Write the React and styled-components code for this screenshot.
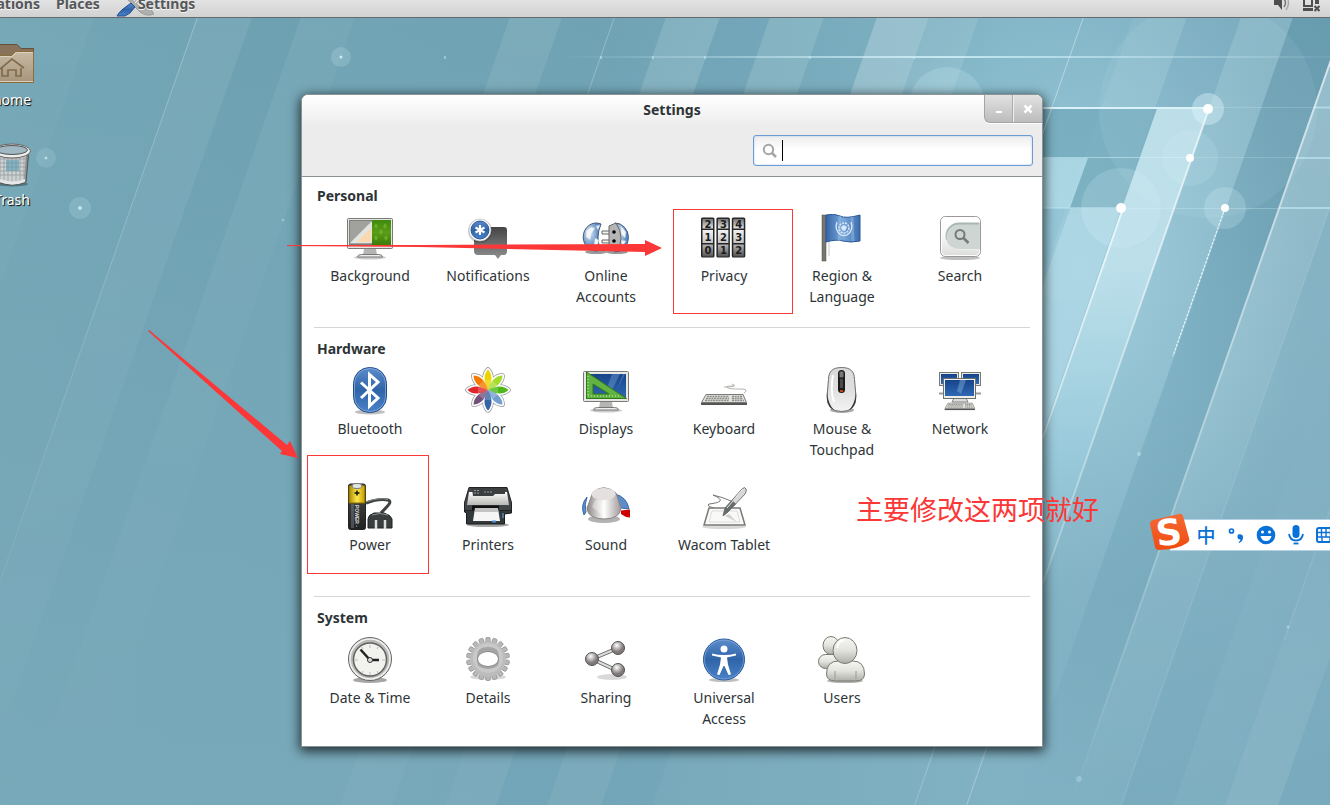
import React from 'react';
import styled, { createGlobalStyle } from 'styled-components';

const red = '#fc3737';
const ink = '#2e3436';
const imeBlue = '#0a71d8';

const GlobalStyle = createGlobalStyle`
  html, body, #root {
    height: 100%;
    margin: 0;
  }
  body {
    overflow: hidden;
    font-family: 'Noto Sans', 'Noto Sans CJK SC', sans-serif;
    font-size: 14px;
    color: ${ink};
  }
  button {
    font: inherit;
    color: inherit;
    border: 0;
    padding: 0;
    background: none;
  }
  svg {
    display: block;
  }
`;

const Desktop = styled.div`
  position: relative;
  width: 100%;
  height: 100%;
  overflow: hidden;
  background: #78a8b8;
`;

const Backdrop = styled.svg`
  position: absolute;
  top: 0; left: 0;
  width: 100%;
  height: 100%;
`;

const Panel = styled.header`
  position: relative;
  display: flex;
  justify-content: space-between;
  align-items: center;
  height: 26px;
  margin-top: -9px;
  border-bottom: 1px solid #666a6c;
  background: linear-gradient(#ebebeb, #d2d2d2);
  color: #555759;
`;

const Menus = styled.nav`
  display: flex;
  align-items: center;
  gap: 16px;
  margin-left: -60px;
`;

const Menu = styled.button`
  display: flex;
  align-items: center;
  justify-content: flex-end;
  min-width: ${({ $width }) => $width || 0}px;
  font-weight: 700;
  line-height: 20px;
  text-shadow: 0 1px #f4f4f4;
  & svg {
    margin-right: -16px;
  }
`;

const Tray = styled.div`
  display: flex;
  gap: 12px;
  padding-right: 10px;
`;

const Shortcut = styled.button`
  position: absolute;
  left: -36px;
  top: ${({ $top }) => $top}px;
  width: 96px;
  display: flex;
  flex-direction: column;
  align-items: center;
  gap: 3px;
  color: #fff;
  line-height: 20px;
  text-shadow: 1px 1px 1px #000;
`;

const Window = styled.section`
  position: absolute;
  left: 301px;
  top: 94px;
  width: 740px;
  border: 1px solid #8b9394;
  border-radius: 7px 7px 0 0;
  background: #fff;
  box-shadow: 0 3px 12px 1px rgba(0, 0, 0, 0.75);
`;

const WindowHead = styled.div`
  border-bottom: 1px solid #8b9394;
  border-radius: 6px 6px 0 0;
  background: linear-gradient(#fff, #ececec 32px);
`;

const TitleBar = styled.div`
  display: grid;
  grid-template-columns: 58px 1fr 58px;
  height: 30px;
`;

const Title = styled.h1`
  grid-column: 2;
  margin: 0;
  font-size: 14px;
  line-height: 30px;
  text-align: center;
`;

const WindowButtons = styled.div`
  display: flex;
  height: 27px;
  border: solid #a5a5a5;
  border-width: 0 0 1px 1px;
  border-radius: 0 6px 0 6px;
  overflow: hidden;
  box-shadow: 0 1px #fff;
  background: linear-gradient(#e2e2e2, #bcbcbc);
`;

const WindowButton = styled.button`
  flex: 1;
  display: grid;
  place-items: center;
  & + & {
    border-left: 1px solid #efefef;
    box-shadow: -1px 0 #ababab;
  }
`;

const Toolbar = styled.div`
  display: flex;
  justify-content: flex-end;
  padding: 10px 9px;
`;

const Search = styled.label`
  display: flex;
  align-items: center;
  gap: 4px;
  box-sizing: border-box;
  width: 280px;
  height: 31px;
  padding: 0 8px;
  border: 1px solid #6c9ad2;
  border-radius: 3px;
  background: linear-gradient(#ededed, #fff 14px);
  box-shadow: inset 0 0 2px #a9c4e6;
`;

const Caret = styled.span`
  width: 1px;
  height: 21px;
  background: #000;
`;

const SearchInput = styled.input`
  flex: 1;
  min-width: 0;
  border: 0;
  outline: 0;
  padding: 0;
  background: transparent;
  font: inherit;
`;

const Group = styled.section`
  margin: 0 12px;
  padding: 9px 0 20px;
  & + & {
    border-top: 1px solid #d5d7d6;
  }
  &:first-of-type {
    padding-top: 7px;
  }
  &:last-of-type {
    padding-bottom: 17px;
  }
`;

const GroupTitle = styled.h2`
  margin: 0;
  padding-left: 3px;
  font-size: 14px;
  line-height: 24px;
`;

const Items = styled.div`
  display: grid;
  grid-template-columns: repeat(6, 118px);
  row-gap: 23px;
  margin: 6px 0 0 -3px;
`;

const Item = styled.button`
  display: flex;
  flex-direction: column;
  align-items: center;
  gap: 3px;
`;

const ItemLabel = styled.span`
  max-width: 98px;
  min-height: 42px;
  line-height: 21px;
`;

const Notes = styled.div`
  position: absolute;
  inset: 0;
  pointer-events: none;
`;

const Arrows = styled.svg`
  position: absolute;
  top: 0; left: 0;
  width: 100%;
  height: 100%;
`;

const Mark = styled.div`
  position: absolute;
  box-sizing: border-box;
  left: ${({ $x }) => $x}px;
  top: ${({ $y }) => $y}px;
  width: ${({ $w }) => $w}px;
  height: ${({ $h }) => $h}px;
  border: 1px solid ${red};
`;

const NoteText = styled.p`
  position: absolute;
  left: 856px;
  top: 491px;
  margin: 0;
  color: ${red};
  font-family: 'Noto Sans CJK SC', sans-serif;
  font-size: 27px;
  line-height: 36px;
  white-space: nowrap;
`;

const Ime = styled.div`
  position: absolute;
  top: 519px;
  left: 1170px;
  right: 0;
  height: 30px;
  display: flex;
  align-items: center;
  gap: 10px;
  padding-left: 26px;
  border: solid #b4d2e4;
  border-width: 1px 0;
  background: #fff;
  color: ${imeBlue};
`;

const ImeLogo = styled.svg`
  position: absolute;
  left: -22px;
  top: -8px;
`;

const ImeKey = styled.button`
  flex: none;
  width: 20px;
  height: 24px;
  display: grid;
  place-items: center;
  font-family: 'Noto Sans CJK SC', sans-serif;
  font-size: 19px;
  font-weight: 500;
  line-height: 24px;
`;

// Shared paints, referenced from every icon
const Paint = ({ id, from, mid, to, flat }) => (
  <linearGradient id={id} x1="0" y1="0" x2={flat ? 1 : 0} y2={flat ? 0 : 1}>
    <stop offset="0" stopColor={from} />
    {mid && <stop offset=".5" stopColor={mid} />}
    <stop offset="1" stopColor={to} />
  </linearGradient>
);

const Slant = ({ x, w, y1 = 17, y2 = 805, fill = '#fff', o = 0.1 }) => {
  const at = (px, y) => `${px - 0.35 * y},${y}`;
  return (
    <polygon
      points={[at(x, y1), at(x + w, y1), at(x + w, y2), at(x, y2)].join(' ')}
      fill={fill}
      opacity={o}
    />
  );
};

const Wallpaper = () => (
  <Backdrop viewBox="0 0 1330 805" preserveAspectRatio="xMinYMin slice" aria-hidden="true">
    <defs>
      <linearGradient id="sky" x1="0" y1="0" x2="1" y2="0">
        <stop offset="0" stopColor="#72a5b4" />
        <stop offset=".45" stopColor="#6fa3b3" />
        <stop offset=".75" stopColor="#7fb3c4" />
        <stop offset="1" stopColor="#79abbd" />
      </linearGradient>
      <linearGradient id="lift" x1="0" y1="0" x2="0" y2="1">
        <stop offset="0" stopColor="#84b2c8" stopOpacity="0" />
        <stop offset="1" stopColor="#82b0c2" stopOpacity=".4" />
      </linearGradient>
      <linearGradient id="fadeDown" x1="0" y1="0" x2="0" y2="1">
        <stop offset="0" stopColor="#fff" />
        <stop offset="1" stopColor="#fff" stopOpacity="0" />
      </linearGradient>
      <linearGradient id="fadeUp" x1="0" y1="0" x2="0" y2="1">
        <stop offset="0" stopColor="#fff" stopOpacity="0" />
        <stop offset="1" stopColor="#fff" />
      </linearGradient>
      <linearGradient id="beam" x1="0" y1="0" x2="0" y2="1">
        <stop offset="0" stopColor="#c0e0ea" />
        <stop offset=".3" stopColor="#c0e2ec" />
        <stop offset=".65" stopColor="#9acbdc" />
        <stop offset="1" stopColor="#8abccd" stopOpacity="0" />
      </linearGradient>
      <linearGradient id="shade" x1="0" y1="0" x2="0" y2="1">
        <stop offset="0" stopColor="#40788f" />
        <stop offset="1" stopColor="#40788f" stopOpacity="0" />
      </linearGradient>
      <linearGradient id="shadeUp" x1="0" y1="0" x2="0" y2="1">
        <stop offset="0" stopColor="#5a90a8" stopOpacity="0" />
        <stop offset="1" stopColor="#5a90a8" />
      </linearGradient>
      <linearGradient id="ray" x1="0" y1="0" x2="1" y2="0">
        <stop offset="0" stopColor="#d5f4fc" stopOpacity="0" />
        <stop offset=".5" stopColor="#d5f4fc" stopOpacity=".8" />
        <stop offset="1" stopColor="#d5f4fc" stopOpacity=".05" />
      </linearGradient>
      <radialGradient id="glow">
        <stop offset="0" stopColor="#a6d6e6" stopOpacity=".7" />
        <stop offset="1" stopColor="#a6d6e6" stopOpacity="0" />
      </radialGradient>
    </defs>
    <rect width="1330" height="805" fill="url(#sky)" />
    <rect width="1330" height="805" fill="url(#lift)" />
    <ellipse cx="1080" cy="270" rx="230" ry="330" fill="url(#glow)" />

    <Slant x={0} w={100} fill="url(#fadeDown)" o={0.03} />
    <Slant x={203} w={55} fill="url(#fadeDown)" o={0.05} />
    <Slant x={258} w={49} fill="url(#shade)" o={0.07} />
    <Slant x={307} w={54} fill="url(#fadeDown)" o={0.04} />
    <Slant x={516} w={52} o={0.09} y2={420} fill="url(#fadeDown)" />
    <Slant x={672} w={54} o={0.13} y2={420} />
    <Slant x={726} w={50} o={0.1} fill="#5f95bb" y2={420} />
    <Slant x={776} w={54} o={0.11} y2={420} />
    <Slant x={883} w={52} o={0.22} y2={420} />
    <Slant x={935} w={50} o={0.1} y2={420} />
    <Slant x={1139} w={54} o={0.06} y2={300} />
    <Slant x={1193} w={54} o={0.2} y2={108} fill="#6297b4" />
    <Slant x={1247} w={52} fill="url(#fadeDown)" o={0.09} />
    <Slant x={1299} w={52} fill="url(#shade)" o={0.3} />
    <Slant x={1351} w={300} fill="url(#fadeDown)" o={0.12} />
    <Slant x={1351} w={52} fill="url(#fadeDown)" o={0.12} />
    <Slant x={622} w={52} y1={720} o={0.03} />
    <Slant x={727} w={51} y1={720} o={0.03} />
    <Slant x={778} w={51} y1={720} o={0.1} fill="#5a90ac" />
    <Slant x={829} w={54} y1={720} o={0.03} />
    <Slant x={883} w={51} y1={720} o={0.1} fill="#5a90ac" />
    <Slant x={1404} w={51} y1={400} o={0.14} fill="url(#shadeUp)" />
    <Slant x={1507} w={53} y1={480} o={0.07} fill="url(#fadeUp)" />
    <Slant x={1560} w={60} y1={480} o={0.12} fill="url(#shadeUp)" />

    <polygon points="1042,109 1157,109 1140,158 1042,158" fill="#6ba3b5" opacity=".6" />
    <polygon points="1042,158 1088,158 1070,208 1042,208" fill="#b7dfe9" opacity=".65" />
    <polygon points="1088,158 1140,158 1122,208 1070,208" fill="#6da6b7" opacity=".65" />
    <polygon points="1070,209 1121,209 1042,435 1042,287" fill="#b5dcea" opacity=".65" />
    <Slant x={1195} w={52} y1={109} y2={640} fill="url(#beam)" o={0.9} />

    <rect x="560" y="56" width="770" height="2" fill="url(#ray)" />
    <rect x="1042" y="107" width="166" height="2" fill="#e8fbff" opacity=".85" />
    <rect x="1042" y="157" width="150" height="1" fill="#d5f4fc" opacity=".5" />
    <rect x="1042" y="207" width="80" height="2" fill="#c0e6f2" opacity=".5" />
    <rect x="1208" y="107" width="106" height="1" fill="#d5f4fc" opacity=".2" />
    <rect x="1192" y="157" width="104" height="1" fill="#d5f4fc" opacity=".2" />
    <rect x="1122" y="208" width="156" height="1" fill="#d5f4fc" opacity=".3" />
    <path d="M1314 107.500H1330M1296 158H1330M1279 208H1330" stroke="#b8e0ee" strokeWidth="2" opacity=".8" />

    <Slant x={203} w={1} o={0.25} fill="url(#fadeDown)" />
    <Slant x={620} w={1} o={0.25} y2={120} />
    <Slant x={1089} w={1} o={0.4} y2={300} />
    <Slant x={1351} w={2} o={0.65} fill="url(#fadeDown)" />
    <Slant x={1402} w={1} y1={207} o={0.1} />
    <Slant x={1508} w={1} y1={500} y2={640} o={0.12} />
    <Slant x={1195} w={2} y1={208} o={0.7} fill="url(#fadeDown)" />
    <Slant x={1246} w={2} y1={109} o={0.75} fill="url(#fadeDown)" />
    <Slant x={1196} w={1} y1={740} o={0.2} />
    <Slant x={1248} w={1} y1={740} o={0.3} />
    <path d="M1225 208L1173 356" stroke="#f4feff" strokeWidth="1.200" strokeDasharray="3 1" opacity=".85" />

    <g fill="#dff8ff">
      <circle cx="1208" cy="109" r="109" opacity=".07" />
      <circle cx="1208" cy="109" r="16" opacity=".4" />
      <circle cx="1190" cy="158" r="28" opacity=".13" />
      <circle cx="1121" cy="208" r="40" opacity=".17" />
      <circle cx="1225" cy="208" r="21" opacity=".2" />
      <circle cx="947" cy="105" r="38" opacity=".18" />
      <circle cx="341" cy="57" r="10" opacity=".17" />
      <circle cx="46" cy="158" r="10" opacity=".13" />
      <circle cx="80" cy="208" r="11" opacity=".15" />
      <circle cx="341" cy="57" r="1.500" opacity=".8" />
      <circle cx="46" cy="158" r="1.500" opacity=".6" />
      <circle cx="80" cy="208" r="2" opacity=".7" />
      <circle cx="1139" cy="454" r="2" opacity=".4" />
      <circle cx="1288" cy="627" r="1.500" opacity=".4" />
      <circle cx="1079" cy="779" r="3" opacity=".25" />
      <circle cx="283" cy="220" r="1.500" opacity=".3" />
    </g>
    <g fill="#c4ecf6">
      {[445, 601, 653, 705, 810, 914].map((x) => (
        <rect key={x} x={x - 1} y="56" width="2" height="3" opacity=".5" />
      ))}
    </g>
    <g fill="#fff">
      <circle cx="1208" cy="109" r="5" />
      <circle cx="1190" cy="158" r="4" />
      <circle cx="1121" cy="208" r="5" />
      <circle cx="1225" cy="208" r="4" />
    </g>
    <defs>
      <Paint id="steel" from="#fff" to="#b8b8b4" />
      <Paint id="tile" from="#fff" mid="#f8f8f8" to="#dcdcda" />
      <Paint id="steelSide" from="#777" mid="#fff" to="#777" flat />
      <Paint id="blue" from="#5c8dcc" mid="#2f64a8" to="#4b83c8" />
      <Paint id="screen" from="#16448a" to="#2f69b4" />
      <Paint id="green" from="#3f8a0c" mid="#5a9c18" to="#3b7d08" />
      <Paint id="dark" from="#4b4f50" to="#1f2223" />
      <Paint id="wheelTop" from="#777" to="#e4e4e4" />
      <Paint id="wheelMid" from="#f2f2f2" to="#c4c4c4" />
      <Paint id="wheelLow" from="#b6b6b6" to="#555" />
      <Paint id="gold" from="#a88600" mid="#ffe94d" to="#c09a00" flat />
      <Paint id="flag" from="#3666a8" mid="#79a8dc" to="#3b6dae" flat />
      <Paint id="bubble" from="#444" to="#909090" />
      <Paint id="stone" from="#f6f6f3" mid="#e3e3de" to="#aeaea6" />
      <Paint id="shell" from="#d9d9d9" mid="#dfdfdf" to="#f4f4f4" />
      <Paint id="folder" from="#c7b9a3" to="#a6957c" />
      <Paint id="knob" from="#8d8584" mid="#fff" to="#a09898" flat />
      <Paint id="sogou" from="#f56a35" to="#f04b10" />
      <radialGradient id="globe" cx=".35" cy=".35">
        <stop offset="0" stopColor="#e6eff8" />
        <stop offset="1" stopColor="#5a8bc4" />
      </radialGradient>
      <radialGradient id="ball" cx=".4" cy=".3">
        <stop offset="0" stopColor="#fff" />
        <stop offset="1" stopColor="#807878" />
      </radialGradient>
    </defs>
  </Backdrop>
);

const Icon = ({ size = 48, children }) => (
  <svg width={size} height={size} viewBox="0 0 48 48" aria-hidden="true">{children}</svg>
);

const Monitor = ({ children }) => (
  <>
    <ellipse cx="24" cy="43.500" rx="16" ry="2" opacity=".2" />
    <path d="M18 35h12l1 6H17z" fill="#b5b6b3" />
    <path d="M11.500 43q0-2.500 4-2.500h17q4 0 4 2.500z" fill="#eee" stroke="#777" />
    <rect x="1.500" y="4.500" width="45" height="30" rx="1" fill="#e6e6e2" stroke="#777a76" />
    {children}
  </>
);

const Background = () => (
  <Icon>
    <Monitor>
      <rect x="3.500" y="6.500" width="22" height="24" fill="#a1a29d" stroke="#7d7f7a" />
      <path d="M4 29L26 7v22z" fill="#e2e5e0" />
      <path d="M11 28L25 14v14z" fill="#fbd9ae" />
      <rect x="26" y="6" width="19" height="25" fill="url(#green)" />
      <path d="M30 9l2 3-2 3-2-3zM39 9l2 3-2 3-2-3zM35 15l2 3-2 3-2-3zM30 21l2 3-2 3-2-3zM40 21l2 3-2 3-2-3z" fill="#7cbf36" opacity=".6" />
    </Monitor>
  </Icon>
);

const Notifications = () => (
  <Icon>
    <path d="M14 13h26q3 0 3 3v21q0 4-3 4h-3l-3 4-3-4H14q-4 0-4-4V16q0-3 4-3z" fill="url(#bubble)" />
    <circle cx="16" cy="17" r="12" fill="#000" opacity=".2" />
    <circle cx="16" cy="16" r="11" fill="#fff" stroke="#bbb" strokeWidth=".7" />
    <circle cx="16" cy="16" r="9" fill="url(#blue)" stroke="#28579a" />
    <path d="M16 11v10M11.500 13.500l9 5M20.500 13.500l-9 5" stroke="#fff" strokeWidth="2.200" />
  </Icon>
);

const Accounts = () => (
  <Icon>
    <ellipse cx="14" cy="38" rx="11" ry="2" opacity=".4" />
    <ellipse cx="35" cy="38" rx="11" ry="2" opacity=".4" />
    <path d="M19 10A13 14 0 1 0 19 36Q13 24 19 10z" fill="url(#globe)" stroke="#44597a" />
    <path d="M4 17l5-4 4 1-3 5-2 7-4-3zM13 24l4 2-2 7-3-3zM14 12l4-1-2 5z" fill="#f3f6f9" stroke="#a9bfd5" strokeWidth=".5" />
    <path d="M33 9A13 14 0 1 1 33 38Q40 24 33 9z" fill="url(#globe)" stroke="#44597a" />
    <path d="M39 12l5 6-1 6-4-4zM39 26l5 1-4 6z" fill="#f3f6f9" stroke="#a9bfd5" strokeWidth=".5" />
    <path d="M20 17h8v3h-8zM20 26h8v3h-8z" fill="#f4f4f4" stroke="#666" />
    <path d="M27 12l7-3q5 7 5 15t-5 14l-7-4z" fill="#b5b5b5" stroke="#666" />
    <circle cx="32" cy="18" r="1.800" /><circle cx="32" cy="27" r="1.800" />
  </Icon>
);

const Privacy = () => (
  <Icon>
    {[['2', '1', '0'], ['3', '2', '1'], ['4', '3', '2']].map((digits, i) => (
      <g key={i} transform={`translate(${i * 15.400} 0)`}>
        <rect x="1" y="3.500" width="13.500" height="40" rx="1.500" fill="#262626" />
        <path d="M2.500 5h10.500v9.500H2.500z" fill="url(#wheelTop)" />
        <path d="M2.500 16h10.500v13H2.500z" fill="url(#wheelMid)" />
        <path d="M2.500 30.500h10.500v12H2.500z" fill="url(#wheelLow)" />
        {digits.map((digit, row) => (
          <text key={row} x="8" y={13.500 + row * 13} fontFamily="DejaVu Sans" fontSize="10" fontWeight="700" textAnchor="middle" fill="#1c1c1c">{digit}</text>
        ))}
      </g>
    ))}
  </Icon>
);

const Region = () => (
  <Icon>
    <path d="M11 28v14" stroke="#bbb" strokeWidth="2" opacity=".4" />
    <rect x="4" y="1" width="4" height="46" fill="#77776f" stroke="#4f4f49" strokeWidth=".5" />
    <path d="M8 1q8-2 14 1t20-1v26q-10 2-17 0t-17 1z" fill="url(#flag)" stroke="#2c5797" />
    <path d="M22 2l-1 25M34 3l1 24" stroke="#a7c8ec" strokeWidth="3" opacity=".4" />
    <circle cx="26" cy="14" r="5" fill="none" stroke="#dbe9f8" strokeWidth="1.500" strokeDasharray="2 1" />
    <path d="M19 8q-3 8 4 13 3 1 6 0 7-5 4-13" fill="none" stroke="#dbe9f8" strokeWidth="1.300" />
    <path d="M23 13l3-2 3 2-2 4-3-1z" fill="#dbe9f8" />
  </Icon>
);

const SearchTile = () => (
  <Icon>
    <ellipse cx="24" cy="44" rx="20" ry="2" opacity=".25" />
    <rect x="4.500" y="2.500" width="40" height="40" rx="5" fill="url(#tile)" stroke="#999" />
    <rect x="5.500" y="3.500" width="38" height="38" rx="4" fill="none" stroke="#fff" />
    <path d="M43.500 8.500H23a13.500 13.500 0 0 0 0 27h20.500z" fill="#a9b7b3" />
    <path d="M43.500 35.500H23a12.500 12.500 0 0 1 0-25h20.500z" fill="#cdd6d3" />
    <path d="M43.500 35.500H23a13.500 13.500 0 0 1-13-10" fill="none" stroke="#eef0e8" />
    <circle cx="24" cy="20.500" r="4.500" fill="none" stroke="#747b79" strokeWidth="2" />
    <path d="M27.500 24l5 5" stroke="#747b79" strokeWidth="2.500" />
  </Icon>
);

const Bluetooth = () => (
  <Icon>
    <ellipse cx="24" cy="45" rx="15" ry="2.500" opacity=".25" />
    <rect x="7.500" y=".5" width="33" height="45" rx="16" fill="url(#blue)" stroke="#1f4b88" />
    <rect x="8.500" y="1.500" width="31" height="43" rx="15" fill="none" stroke="#8db1df" opacity=".7" />
    <path d="M15 15.500L32 31l-8.500 8V7.500L32 15 15 31" fill="none" stroke="#fff" strokeWidth="3" />
  </Icon>
);

const petals = ['#edd400', '#a5dc2c', '#4fb818', '#729fcf', '#3465a4', '#75507b', '#e0262b', '#f57900'];

const Color = () => (
  <Icon>
    {['#999', '#fff'].map((stroke, i) => (
      <g key={stroke} stroke={stroke} strokeWidth={i ? 4 : 5.500} strokeLinejoin="round">
        {petals.map((fill, turn) => (
          <path key={fill} d="M24 23Q18 10 24 3q6 7 0 20z" fill={fill} transform={`rotate(${turn * 45} 24 23)`} />
        ))}
      </g>
    ))}
    {petals.map((fill, turn) => (
      <g key={fill} transform={`rotate(${turn * 45} 24 23)`}>
        <path d="M24 23Q17 10 24 2.500q7 7.500 0 20.500z" fill={fill} />
        <path d="M24 23q-3-6-3-10h6q0 4-3 10z" fill="#fff" opacity=".2" />
      </g>
    ))}
  </Icon>
);

const Displays = () => (
  <Icon>
    <Monitor>
      <rect x="4" y="7" width="40" height="25" fill="url(#screen)" />
      <path d="M30 7h8l-9 18-4-4zM41 7h2l-8 16z" fill="#7ba6d8" opacity=".4" />
      <path d="M4.500 5v26.500h40zM11 17l16 10H11z" fill="#62b143" fillRule="evenodd" stroke="#2f7a12" />
      <path d="M6 29h33M6 9v20" stroke="#c6efb4" strokeDasharray="1 2" />
    </Monitor>
  </Icon>
);

const Keys = () => (
  <>
    <path d="M6 27.500h37l3.500 8h-45z" fill="#e2e2de" stroke="#777a76" />
    <path d="M1 36h46v2H1z" fill="#555" />
    <path d="M7 29.500h22M6 31.500h23M5 33.500h24M32 29.500h10M32 31.500h11M32 33.500h12" stroke="#8d8f89" strokeWidth="1.400" strokeDasharray="2 .7" />
  </>
);

const Keyboard = () => (
  <Icon>
    <path d="M44 26q6-4-4-4t-12-1q-5-2 6-2M24 20q16 0 8-3" fill="none" stroke="#b5b5b0" />
    <Keys />
  </Icon>
);

const Mouse = () => (
  <Icon>
    <ellipse cx="24" cy="43" rx="12" ry="3" opacity=".35" />
    <path d="M23.500.5c9 0 13 4 13 12l1.500 17q0 15-14.500 15T9 29.500l1.500-17c0-8 4-12 13-12z" fill="url(#shell)" stroke="#6d6d6a" />
    <path d="M9 25q1 12 7 18Q8 40 9 25zM38 25q-1 12-7 18 8-3 7-18z" fill="#323737" />
    <path d="M15 8q-3 15 1 27" stroke="#fff" strokeWidth="2" fill="none" />
    <rect x="20" y="3" width="7" height="23" rx="3.500" fill="#1b1b1b" />
    <rect x="21.500" y="4.500" width="4" height="6" rx="1" fill="#777" />
    <path d="M22 12h3v9h-3z" fill="#4a4a4a" />
    <path d="M22 23h3v2h-3z" fill="#c9420f" />
  </Icon>
);

const Network = () => (
  <Icon>
    <path d="M3 26.500h12M33 26.500h12" stroke="#999" strokeWidth="2" />
    <path d="M8 19h8v6H8zM32 19h8v6h-8z" fill="#ccc" />
    <rect x="3.500" y="5.500" width="19" height="13" fill="#e7e7e4" stroke="#777a76" />
    <rect x="5" y="7" width="16" height="10" fill="url(#screen)" />
    <rect x="25.500" y="5.500" width="19" height="13" fill="#e7e7e4" stroke="#777a76" />
    <rect x="27" y="7" width="16" height="10" fill="url(#screen)" />
    <path d="M18 31h12l2 4H16z" fill="#ddd" stroke="#888" />
    <rect x="7.500" y="11.500" width="32" height="20" fill="#eeeeeb" stroke="#6d706c" />
    <rect x="9" y="13" width="29" height="16" fill="url(#screen)" />
    <path d="M24 13h6l-5 14-4-3z" fill="#7ba6d8" opacity=".5" />
    <g transform="translate(8 18) scale(.66)"><Keys /></g>
  </Icon>
);

const Power = () => (
  <Icon>
    <path d="M20 20q13-5 22-3c6 2-4 9-7 13" fill="none" stroke="#3f4344" strokeWidth="3" />
    <path d="M20 19q13-5 22-2.500" fill="none" stroke="#85898a" />
    <path d="M22 45v-9q0-4 6-6h10q7 2 8 6v9z" fill="#3a3e3f" stroke="#1f2222" />
    <path d="M26 32q8-3 16 0" stroke="#8b8f90" fill="none" />
    <path d="M30 37v9M39 37v9" stroke="#ddd" strokeWidth="2.500" />
    <rect x="2.500" y="1" width="17" height="45.500" rx="2" fill="url(#dark)" stroke="#222" />
    <rect x="5" y="21" width="3" height="24" fill="#777" opacity=".5" />
    <path d="M3 3q8-3 16 0v17H3z" fill="url(#gold)" stroke="#876b00" />
    <ellipse cx="11" cy="3" rx="5" ry="2.500" fill="#e3e3df" stroke="#777" />
    <path d="M11 7.500v5M8.500 10h5" stroke="#111" strokeWidth="1.500" />
    <text x="22" y="-9" transform="rotate(90)" fontFamily="Liberation Sans" fontSize="5" fontWeight="700" fill="#ddd">POWER -</text>
  </Icon>
);

const Printer = () => (
  <Icon>
    <ellipse cx="24" cy="42" rx="21" ry="2" opacity=".35" />
    <path d="M.5 20h47v10l-7 1v10H2.500V30l-2-1z" fill="#33383a" stroke="#181a1b" />
    <path d="M5 4.500h38l4.500 15v8H.5v-8z" fill="#404547" stroke="#222" />
    <path d="M5 9h38l2 13H3z" fill="url(#steel)" />
    <path d="M8 5h33v6H31l-2 2H9z" fill="#3b3f40" />
    <path d="M10 7.500h5M10 10h5M20 9h9" stroke="#999" strokeDasharray="2 1" />
    <path d="M8 22.500h27v5H8z" fill="#111" />
    <path d="M11 25h23l2 13H9z" fill="#f5f5f5" />
    <path d="M11 25h23v4H11z" fill="#777" opacity=".4" />
    <path d="M28 37.500h4v2h-4z" fill="#4a8cdb" />
    <path d="M38 30h2v5h-2z" fill="#526f96" />
  </Icon>
);

const Sound = () => (
  <Icon>
    <path d="M2 32Q-2 22 5 14Q2 22 4 29zM33 11q12 3 14 15l-8-1z" fill="#5d8dc8" stroke="#3a68a8" />
    <path d="M39 27.500l9-1v8l-4-.5-5-3z" fill="#cf0000" />
    <ellipse cx="22" cy="36" rx="16" ry="4" opacity=".3" />
    <path d="M11 9q11-9 23 1l5 15q-1 11-17 11Q6 36 5 25z" fill="url(#knob)" stroke="#8a8484" />
    <ellipse cx="21.500" cy="11" rx="12" ry="6" fill="#e4e0e0" />
    <path d="M10 24q4-12 9-5t5 16" fill="#fff" opacity=".35" />
  </Icon>
);

const Tablet = () => (
  <Icon>
    <ellipse cx="24" cy="44" rx="22" ry="2" opacity=".15" />
    <path d="M31 18q-9-4-18-6 9 4 7 6T9 21q-3 2 5 4" fill="none" stroke="#777" />
    <path d="M9 25h31l5 17H4z" fill="#f9f9f7" stroke="#777a76" strokeWidth="1.500" />
    <path d="M12 28h25l3 11H9z" fill="none" stroke="#ddddda" />
    <path d="M25 33l12 6-8-8z" fill="#999" opacity=".4" />
    <path d="M23 33l2-8L42 6q3-3 4 0 1 2-1 5L28 29z" fill="#d8d8d8" stroke="#777" />
    <path d="M23 33l2-8 7-8 4 4-8 8z" fill="#666b6c" />
    <path d="M27 25l6-7M36 14l7-8" stroke="#eee" />
  </Icon>
);

const Clock = () => (
  <Icon>
    <ellipse cx="24" cy="44" rx="17" ry="3" opacity=".35" />
    <circle cx="24" cy="23" r="21.500" fill="#b9bab8" stroke="#666" />
    <circle cx="24" cy="23" r="20" fill="none" stroke="#f2f2f2" strokeWidth="1.500" />
    <circle cx="24" cy="23.500" r="16.500" fill="#f2f3ef" stroke="#5f625f" strokeWidth="1.500" />
    <path d="M24 9v3M24 36v3M9 24h3M36 24h3M16 11l1 2M32 11l-1 2M16 37l1-2M32 37l-1-2" stroke="#bbb" />
    <path d="M14.500 13.500L24 24" stroke="#222" strokeWidth="2.500" />
    <path d="M24 24h9" stroke="#222" strokeWidth="2.500" />
    <circle cx="24" cy="24" r="2.500" fill="#ddd" stroke="#333" />
  </Icon>
);

const Gear = () => (
  <Icon>
    <ellipse cx="24" cy="41" rx="18" ry="3" opacity=".15" />
    <g fill="#b8b8b8" stroke="#8c8c8c" strokeWidth=".7">
      {Array.from({ length: 18 }, (_, i) => (
        <rect key={i} x="21.800" y="1.500" width="4.400" height="9" rx="1" transform={`rotate(${i * 20} 24 23)`} />
      ))}
    </g>
    <circle cx="24" cy="23" r="17.500" fill="#bcbcbc" />
    <circle cx="24" cy="22" r="15" fill="#c9c9c9" />
    <path d="M13 20q0-9 11-9t11 9v6q0 6-11 7-11-1-11-7z" fill="#a5a5a5" />
    <ellipse cx="24" cy="23" rx="10.500" ry="7.500" fill="#fff" stroke="#888" />
  </Icon>
);

const Sharing = () => (
  <Icon>
    <ellipse cx="30" cy="41" rx="15" ry="3" opacity=".15" />
    <path d="M10 23l26-11M10 23l26 12" stroke="#666" strokeWidth="4" />
    <path d="M10 23l26-11M10 23l26 12" stroke="#ddd" strokeWidth="2" />
    {[[10, 23], [36, 12], [36, 34]].map(([cx, cy]) => (
      <circle key={cy} cx={cx} cy={cy} r="6.500" fill="url(#ball)" stroke="#555" />
    ))}
  </Icon>
);

const Access = () => (
  <Icon>
    <ellipse cx="24" cy="44" rx="15" ry="2" opacity=".25" />
    <circle cx="24" cy="23.500" r="20.500" fill="url(#blue)" stroke="#24569c" />
    <circle cx="24" cy="23.500" r="19.500" fill="none" stroke="#8fb4e2" opacity=".6" />
    <circle cx="24" cy="13" r="3.500" fill="#fff" />
    <path d="M12 17.500q12 3 24 0v2l-9 2 1 7 3 10-2.500.5L24.500 30h-1L19.500 39 17 38.500l3-10 1-7-9-2z" fill="#fff" />
  </Icon>
);

const Users = () => (
  <Icon>
    <ellipse cx="27" cy="45" rx="18" ry="2" opacity=".3" />
    <g fill="url(#stone)" stroke="#777a70">
      <rect x=".5" y="18.500" width="26" height="14" rx="7" />
      <ellipse cx="13" cy="9.500" rx="8" ry="9" />
      <path d="M8.500 38q0-13 12-13h14q12 0 12 13 0 7-9 7h-20q-9 0-9-7z" />
      <ellipse cx="27" cy="14.500" rx="12" ry="13" />
    </g>
    <path d="M17 35v8M38 35v8" stroke="#999" />
    <path d="M19 12q1-7 7-8" fill="none" stroke="#fff" strokeWidth="2" />
  </Icon>
);

const ToolsIcon = () => (
  <svg width="38" height="26" viewBox="0 0 38 26" aria-hidden="true">
    <path d="M8 2l7 6 10 9h9l4 6q-7 3-14-2L12 9 7 5z" fill="#aeb0ae" stroke="#999" />
    <path d="M19 12L30 1" stroke="#888" strokeWidth="3" />
    <path d="M19 12L30 1" stroke="#f3f3f3" strokeWidth="1.500" />
    <path d="M15 12l4 4-5 6-5 3H1q2-4 6-7z" fill="url(#blue)" stroke="#234e8a" />
  </svg>
);

const FolderIcon = () => (
  <svg width="48" height="48" viewBox="0 0 48 48" aria-hidden="true">
    <path d="M2 5.500h27l4 4h12.500V43H2z" fill="#88735a" stroke="#62503a" />
    <path d="M1.500 16.500h22l4-4h18v31h-44z" fill="url(#folder)" stroke="#8a6d3c" />
    <path d="M2.500 17.500h22l4-4h16" fill="none" stroke="#ddd1bd" />
    <path d="M12 30l12-10 12 9M14 29v8h6v-6h8v6h5v-8" fill="none" stroke="#816b4c" strokeWidth="1.700" />
    <path d="M2 42.500h43" stroke="#d9cdb8" />
  </svg>
);

const TrashIcon = () => (
  <svg width="48" height="48" viewBox="0 0 48 48" aria-hidden="true">
    <ellipse cx="24" cy="45" rx="16" ry="2.500" opacity=".3" />
    <path d="M7 11h34l-3 32q-14 6-28 0z" fill="url(#steelSide)" stroke="#555" />
    <path d="M10 15h28l-2 26q-12 5-24 0z" fill="#cdd2d3" />
    <path d="M12 16v26M16 16v28M20 16v28M24 16v28M28 16v28M32 16v28M36 16v26M11 20h27M11 24h27M11 28h27M11 32h26M12 36h25" stroke="#8f9698" strokeWidth=".7" />
    <path d="M18 21h13v11H18z" fill="#5c9db4" opacity=".6" />
    <path d="M11 40q13 5 26 0v3q-13 5-26 0z" fill="#e7e7e7" />
    <ellipse cx="24" cy="12" rx="18.500" ry="7" fill="#eee" stroke="#666" />
    <ellipse cx="24" cy="11" rx="15.500" ry="4.500" fill="#9fb8c1" stroke="#555" />
  </svg>
);

const groups = [
  {
    title: 'Personal',
    items: [
      ['Background', Background],
      ['Notifications', Notifications],
      ['Online Accounts', Accounts],
      ['Privacy', Privacy],
      ['Region & Language', Region],
      ['Search', SearchTile],
    ],
  },
  {
    title: 'Hardware',
    items: [
      ['Bluetooth', Bluetooth],
      ['Color', Color],
      ['Displays', Displays],
      ['Keyboard', Keyboard],
      ['Mouse & Touchpad', Mouse],
      ['Network', Network],
      ['Power', Power],
      ['Printers', Printer],
      ['Sound', Sound],
      ['Wacom Tablet', Tablet],
    ],
  },
  {
    title: 'System',
    items: [
      ['Date & Time', Clock],
      ['Details', Gear],
      ['Sharing', Sharing],
      ['Universal Access', Access],
      ['Users', Users],
    ],
  },
];

const TopPanel = () => (
  <Panel>
    <Menus>
      <Menu $width={100}>Applications</Menu>
      <Menu>Places</Menu>
      <Menu><ToolsIcon />Settings</Menu>
    </Menus>
    <Tray>
      <svg width="18" height="20" viewBox="0 0 18 20" aria-label="Volume">
        <path d="M1 6h4l4-5v15l-4-5H1z" fill="#4c4e50" />
        <path d="M11 5q3 4 0 8" fill="none" stroke="#777" strokeWidth="1.500" />
        <path d="M13 2q5 7 0 14" fill="none" stroke="#aaa" strokeWidth="1.500" />
      </svg>
      <svg width="17" height="20" viewBox="0 0 17 20" aria-label="Network disconnected">
        <path d="M1 4h8v8H1z" fill="none" stroke="#4c4e50" strokeWidth="2" />
        <path d="M0 14h10v3H0zM12 3h4v7h-4z" fill="#4c4e50" />
        <path d="M11.500 12l5 5M16.500 12l-5 5" stroke="#4c4e50" strokeWidth="2" />
      </svg>
    </Tray>
  </Panel>
);

const SettingsWindow = () => (
  <Window>
    <WindowHead>
      <TitleBar>
        <Title>Settings</Title>
        <WindowButtons>
          <WindowButton aria-label="Minimize">
            <svg width="10" height="10"><path d="M2 8h6" stroke="#fff" strokeWidth="2" /></svg>
          </WindowButton>
          <WindowButton aria-label="Close">
            <svg width="10" height="10"><path d="M1.500 1.500l7 7M8.500 1.500l-7 7" stroke="#fff" strokeWidth="2.500" /></svg>
          </WindowButton>
        </WindowButtons>
      </TitleBar>
      <Toolbar>
        <Search>
          <svg width="16" height="16" aria-hidden="true">
            <circle cx="6.500" cy="6.500" r="4.700" fill="none" stroke="#a4a7a6" strokeWidth="2" />
            <path d="M10 10l4 4" stroke="#a4a7a6" strokeWidth="2.500" />
          </svg>
          <Caret />
          <SearchInput type="text" aria-label="Search settings" />
        </Search>
      </Toolbar>
    </WindowHead>
    {groups.map(({ title, items }) => (
      <Group key={title}>
        <GroupTitle>{title}</GroupTitle>
        <Items>
          {items.map(([label, Picture]) => (
            <Item key={label}>
              <Picture />
              <ItemLabel>{label}</ItemLabel>
            </Item>
          ))}
        </Items>
      </Group>
    ))}
  </Window>
);

const ImeBar = () => (
  <Ime>
    <ImeLogo width="42" height="42" viewBox="0 0 42 42" aria-label="Sogou">
      <path d="M5 8L31 2q3-1 4 2l6 22q1 3-2 5-8 6-28 7-3 0-4-3L2 12q0-3 3-4z" fill="url(#sogou)" />
      <text x="21" y="33" transform="rotate(-6 21 21)" textAnchor="middle" fontFamily="DejaVu Sans" fontWeight="700" fontSize="36" fill="#fff">S</text>
    </ImeLogo>
    <ImeKey>中</ImeKey>
    <ImeKey aria-label="Punctuation">
      <svg width="16" height="18" viewBox="0 0 16 18">
        <circle cx="3.500" cy="5" r="2" fill="none" stroke={imeBlue} strokeWidth="1.700" />
        <path d="M10 8.500q5-1 5 3 0 4-4 5.500l-.5-1q2-1 2-2.500-3 0-3-2.500 0-2 .5-2.500z" fill={imeBlue} />
      </svg>
    </ImeKey>
    <ImeKey aria-label="Emoji">
      <svg width="20" height="20" viewBox="0 0 20 20">
        <circle cx="10" cy="10" r="9.300" fill={imeBlue} />
        <circle cx="6.500" cy="7" r="1.500" fill="#fff" />
        <circle cx="13.500" cy="7" r="1.500" fill="#fff" />
        <path d="M4.500 11h11q-1 5-5.500 5t-5.500-5z" fill="#fff" />
      </svg>
    </ImeKey>
    <ImeKey aria-label="Voice input">
      <svg width="16" height="20" viewBox="0 0 16 20">
        <rect x="4.500" y="0" width="7" height="13" rx="3.500" fill={imeBlue} />
        <path d="M1 9q1 6.500 7 6.500T15 9" fill="none" stroke={imeBlue} strokeWidth="1.800" />
        <path d="M5.500 18.500h5" stroke={imeBlue} strokeWidth="1.800" />
      </svg>
    </ImeKey>
    <ImeKey aria-label="Keyboard">
      <svg width="20" height="16" viewBox="0 0 20 16">
        <rect x="1" y="1" width="18" height="14" rx="2" fill="none" stroke={imeBlue} strokeWidth="2" />
        <path d="M1 5.500h18M1 10h18M5.500 1v9M10 1v9M14.500 1v9M6 10v5M14 10v5" stroke={imeBlue} strokeWidth="1.400" />
      </svg>
    </ImeKey>
  </Ime>
);

const App = () => (
  <>
    <GlobalStyle />
    <Desktop>
      <Wallpaper />
      <TopPanel />
      <Shortcut $top={39}><FolderIcon />home</Shortcut>
      <Shortcut $top={139}><TrashIcon />Trash</Shortcut>
      <SettingsWindow />
      <Notes>
        <Arrows aria-hidden="true">
          <polygon points="287,245 420,245 645,244 645,240 662,248 645,256 645,252 420,247 287,246" fill={red} />
          <polygon points="149,330 287,445 290,441 298,458 280,454 282,451 148,331" fill={red} />
        </Arrows>
        <Mark $x={673} $y={209} $w={120} $h={105} />
        <Mark $x={307} $y={455} $w={122} $h={119} />
        <NoteText>主要修改这两项就好</NoteText>
      </Notes>
      <ImeBar />
    </Desktop>
  </>
);

export default App;
